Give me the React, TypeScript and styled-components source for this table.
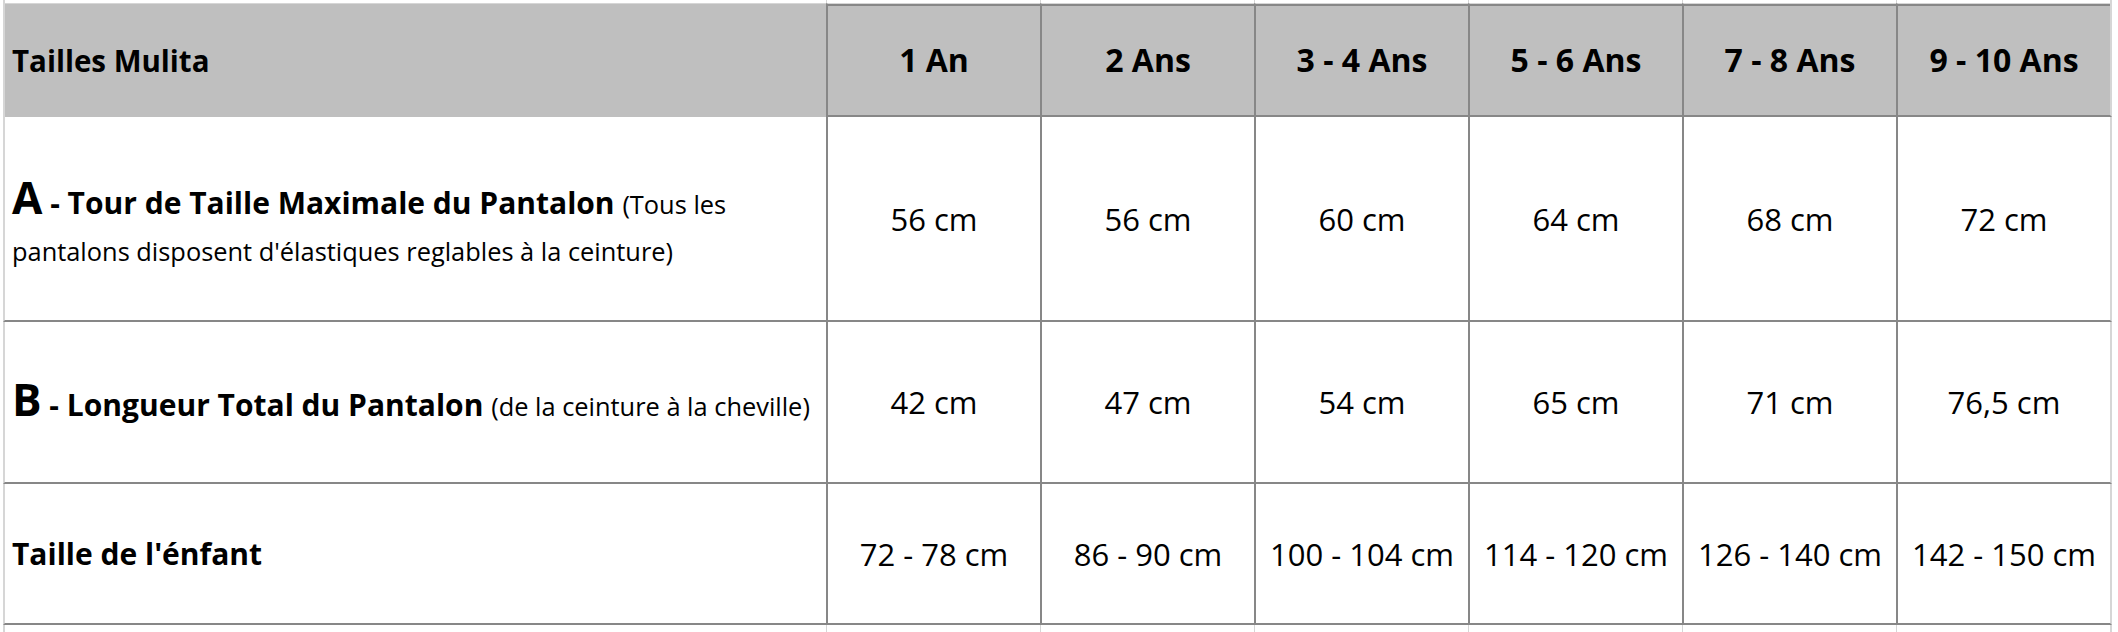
import styled, { createGlobalStyle } from 'styled-components';

const GlobalStyle = createGlobalStyle`
html, body {
  margin: 0;
  padding: 0;
  background: #ffffff;
}
body {
  font-family: 'Open Sans', 'Liberation Sans', sans-serif;
  color: #000000;
}
`;

const LIGHT = '#d6d6d6';
const DARK = '#878787';
const HEAD_BG = '#bfbfbf';

const columns = ['1 An', '2 Ans', '3 - 4 Ans', '5 - 6 Ans', '7 - 8 Ans', '9 - 10 Ans'];

const waist = ['56 cm', '56 cm', '60 cm', '64 cm', '68 cm', '72 cm'];
const length = ['42 cm', '47 cm', '54 cm', '65 cm', '71 cm', '76,5 cm'];
const height = ['72 - 78 cm', '86 - 90 cm', '100 - 104 cm', '114 - 120 cm', '126 - 140 cm', '142 - 150 cm'];

const App = () => {
  const last = columns.length - 1;
  return (
    <>
      <GlobalStyle />
      <Sheet>
        {/* gridline strip above the table */}
        <Gap $first />
        {columns.map((c, i) => (
          <Gap key={'t' + c} $last={i === last} />
        ))}

        <HeadLabel>Tailles Mulita</HeadLabel>
        {columns.map((c, i) => (
          <HeadCell key={c} $last={i === last}>{c}</HeadCell>
        ))}

        <LabelCell $top={10}>
          <LabelText>
            <Letter>A</Letter> - Tour de Taille Maximale du Pantalon <Note>(Tous les</Note>
            <br />
            <Note>pantalons disposent d'élastiques reglables à la ceinture)</Note>
          </LabelText>
        </LabelCell>
        {waist.map((v, i) => (
          <ValueCell key={'a' + i} $last={i === last}>{v}</ValueCell>
        ))}

        <LabelCell>
          <LabelText>
            <Letter>B</Letter> - Longueur Total du Pantalon <Note>(de la ceinture à la cheville)</Note>
          </LabelText>
        </LabelCell>
        {length.map((v, i) => (
          <ValueCell key={'b' + i} $last={i === last}>{v}</ValueCell>
        ))}

        <LabelCell>
          <LabelText>Taille de l'énfant</LabelText>
        </LabelCell>
        {height.map((v, i) => (
          <ValueCell key={'c' + i} $last={i === last}>{v}</ValueCell>
        ))}

        {/* gridline strip below the table */}
        <Gap $first />
        {columns.map((c, i) => (
          <Gap key={'b' + c} $last={i === last} />
        ))}
      </Sheet>
    </>
  );
};

const Sheet = styled.div`
display: grid;
grid-template-columns: 823px repeat(5, 214px) 216px;
grid-template-rows: 3px 114px 205px 162px 141px 7px;
margin-left: 3px;
width: fit-content;
`;

const Gap = styled.div<{ $first?: boolean; $last?: boolean }>`
box-sizing: border-box;
border-left: ${p => (p.$first ? `2px solid ${LIGHT}` : `1px solid ${LIGHT}`)};
border-right: ${p => (p.$last ? `2px solid ${LIGHT}` : 'none')};
`;

const HeadLabel = styled.div`
box-sizing: border-box;
display: flex;
align-items: center;
padding-left: 7px;
background: ${HEAD_BG};
border-left: 2px solid ${LIGHT};
border-top: 1px solid ${LIGHT};
font-weight: 700;
font-size: 29.5px;
white-space: nowrap;
`;

const HeadCell = styled.div<{ $last?: boolean }>`
box-sizing: border-box;
display: flex;
align-items: center;
justify-content: center;
background: ${HEAD_BG};
border-left: 2px solid ${DARK};
border-top: 1px solid ${LIGHT};
border-bottom: 2px solid ${DARK};
border-right: ${p => (p.$last ? `2px solid ${LIGHT}` : 'none')};
box-shadow: inset 0 2px 0 ${DARK};
font-weight: 700;
font-size: 32px;
white-space: nowrap;
`;

const LabelCell = styled.div<{ $top?: number }>`
box-sizing: border-box;
display: flex;
align-items: center;
padding-left: 7px;
padding-top: ${p => p.$top ?? 0}px;
border-left: 2px solid ${LIGHT};
border-bottom: 2px solid ${DARK};
`;

const LabelText = styled.div`
font-weight: 700;
font-size: 30px;
line-height: 46px;
white-space: nowrap;
`;

const Letter = styled.span`
font-size: 44px;
font-weight: 700;
`;

const Note = styled.span`
font-size: 25.4px;
font-weight: 400;
`;

const ValueCell = styled.div<{ $last?: boolean }>`
box-sizing: border-box;
display: flex;
align-items: center;
justify-content: center;
border-left: 2px solid ${DARK};
border-bottom: 2px solid ${DARK};
border-right: ${p => (p.$last ? `2px solid ${LIGHT}` : 'none')};
font-size: 31px;
font-weight: 400;
white-space: nowrap;
`;

export default App;
